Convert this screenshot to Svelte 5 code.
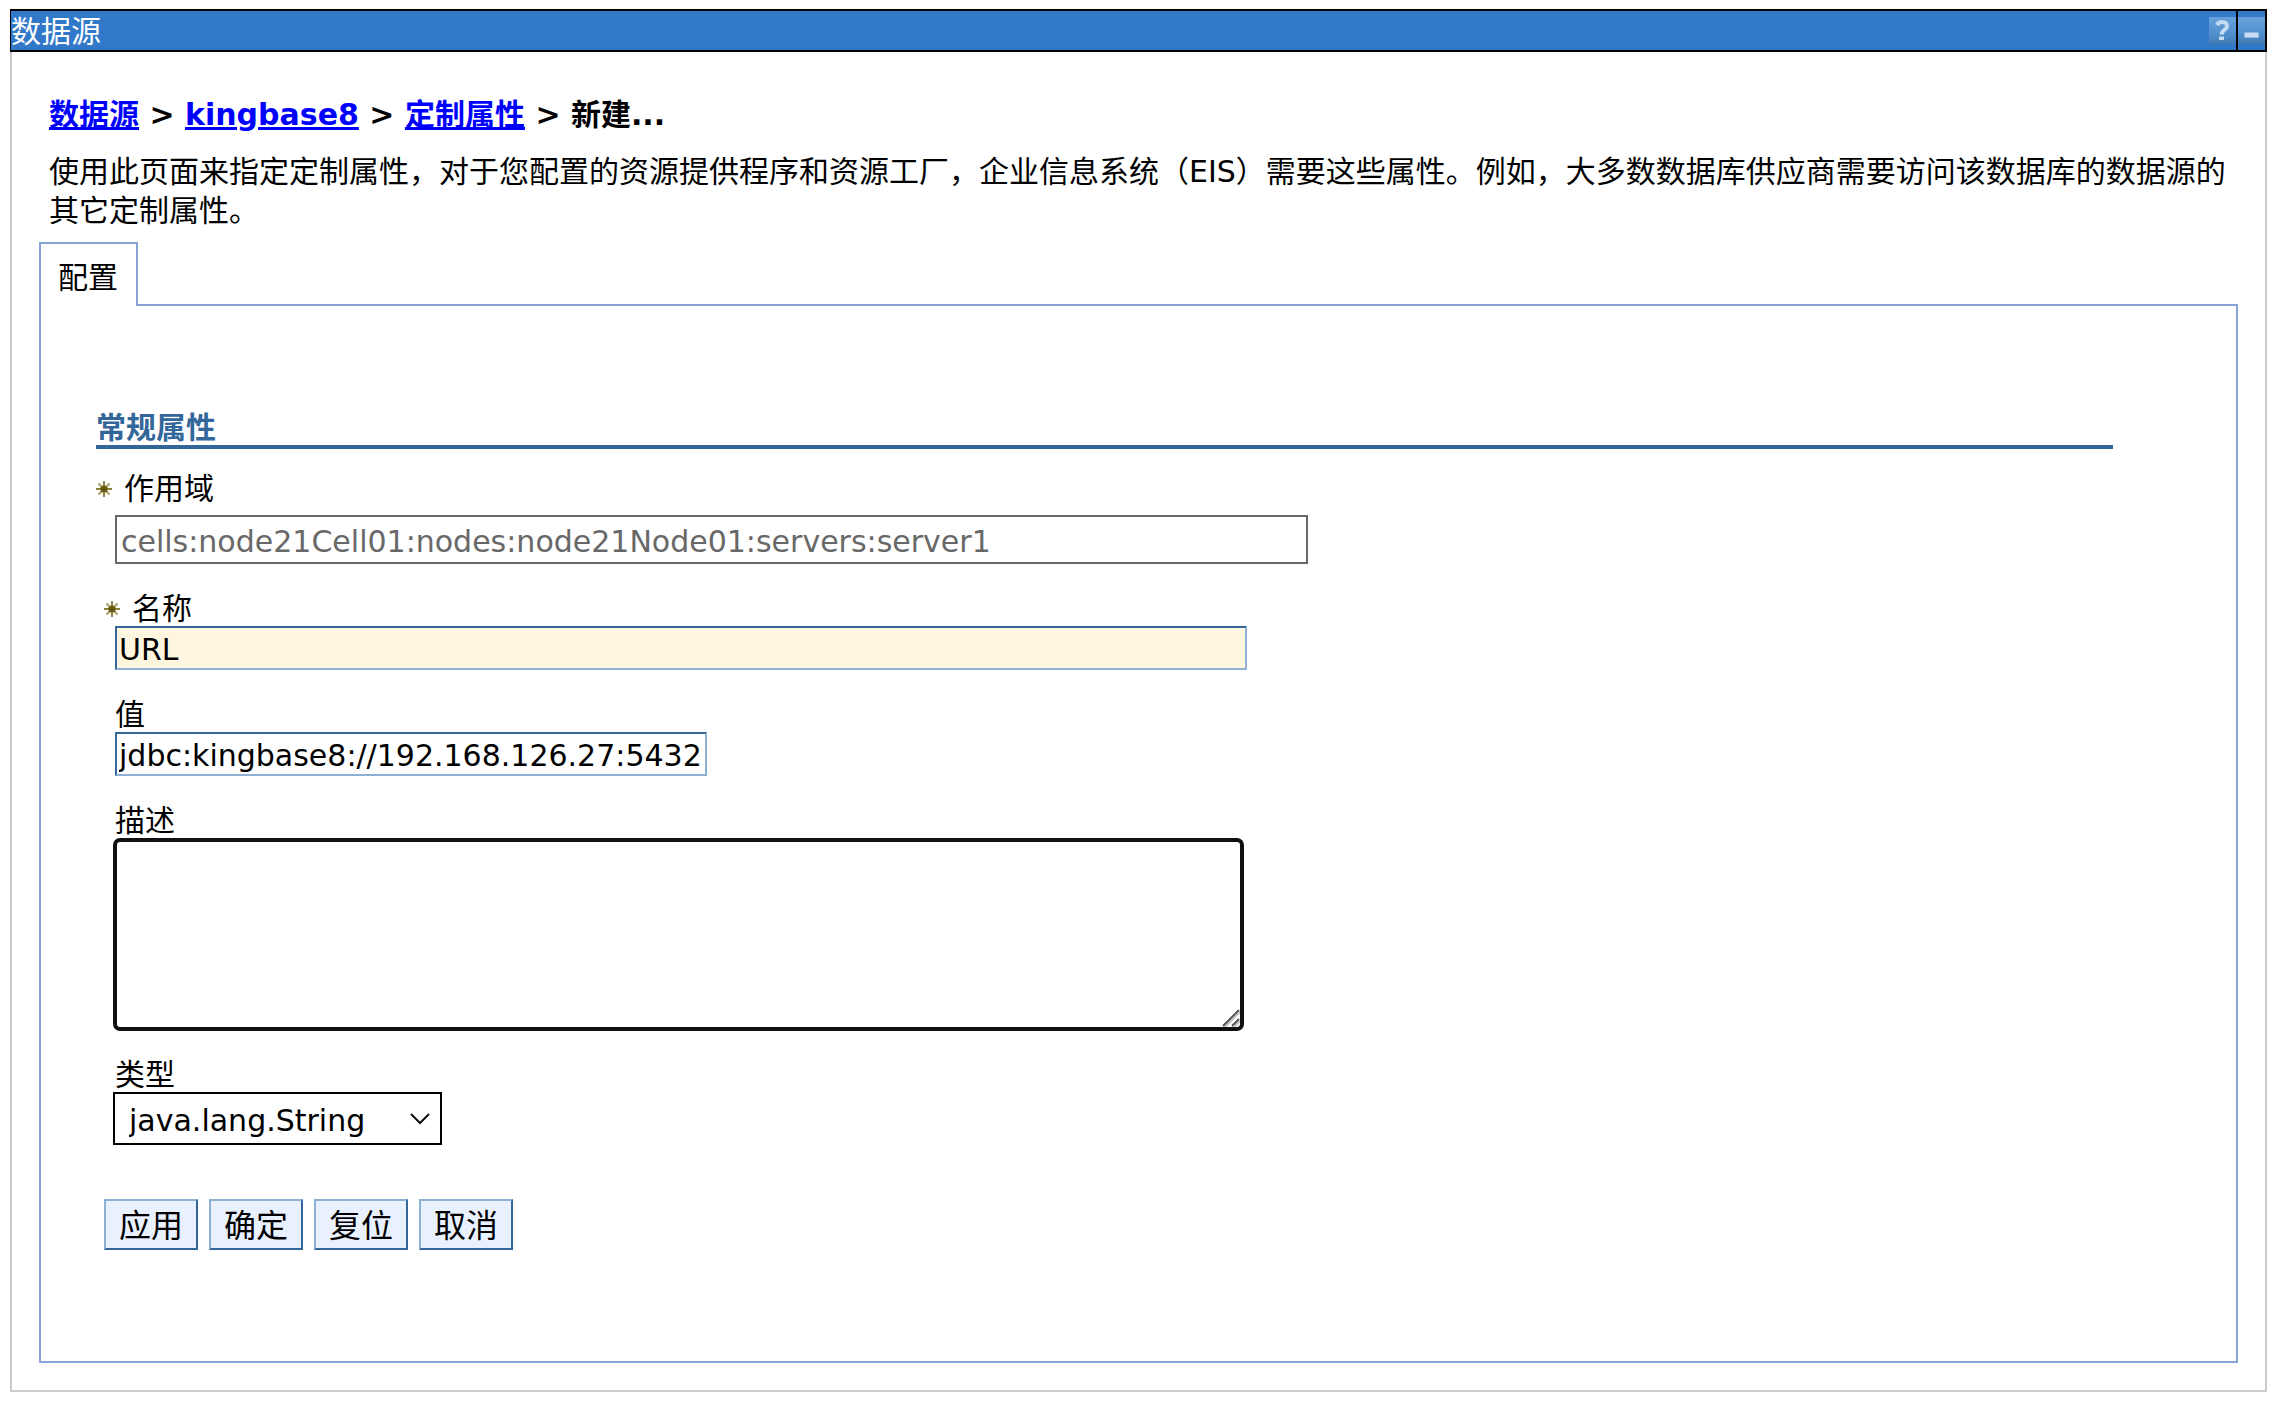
<script>
  let scope = $state('cells:node21Cell01:nodes:node21Node01:servers:server1');
  let name = $state('URL');
  let value = $state('jdbc:kingbase8://192.168.126.27:54321');
  let description = $state('');
  let type = $state('java.lang.String');

  const actions = ['应用', '确定', '复位', '取消'];
</script>

{#snippet required()}
  <svg class="required" viewBox="0 0 16 16" aria-hidden="true">
    <path d="M8 0v16M0 8h16" stroke="#8d8440" stroke-width="2" />
    <path d="M2.5 2.5l11 11M13.5 2.5l-11 11" stroke="#a89f68" stroke-width="2" />
    <circle cx="8" cy="8" r="3.6" fill="#675a0e" />
  </svg>
{/snippet}

<main class="portlet">
  <header class="titlebar">
    <h1>数据源</h1>
    <button class="tool" aria-label="帮助">
      <svg viewBox="0 0 27 27" aria-hidden="true">
        <defs>
          <linearGradient id="face" x1="0" y1="0" x2="0" y2="1">
            <stop offset="0" stop-color="#69a1da" />
            <stop offset="0.6" stop-color="#5191d0" />
            <stop offset="1" stop-color="#4379b0" />
          </linearGradient>
        </defs>
        <rect width="27" height="27" fill="url(#face)" />
        <path d="M8 8C10 4 18 4 18 9C18 13 13 12 12.500 17.500" fill="none" stroke="#c5dcf2" stroke-width="4" />
        <path d="M10 19.500h5v3.500h-5z" fill="#c5dcf2" />
      </svg>
    </button>
    <button class="tool last" aria-label="最小化">
      <svg viewBox="0 0 27 27" aria-hidden="true">
        <rect width="27" height="27" fill="url(#face)" />
        <rect x="6" y="15" width="15" height="6" rx="1" fill="#8bb7e3" />
        <rect x="7" y="16" width="13" height="4" fill="#c9def3" />
      </svg>
    </button>
  </header>

  <div class="body">
    <nav class="crumbs" aria-label="breadcrumb">
      <a href="#sources">数据源</a> &gt; <a href="#kingbase8">kingbase8</a> &gt; <a href="#custom">定制属性</a> &gt; <span>新建...</span>
    </nav>
    <p class="intro">使用此页面来指定定制属性，对于您配置的资源提供程序和资源工厂，企业信息系统（EIS）需要这些属性。例如，大多数数据库供应商需要访问该数据库的数据源的其它定制属性。</p>

    <div class="tabs">
      <button class="tab">配置</button>
      <div class="tabfill"></div>
    </div>

    <form class="panel" onsubmit={(e) => e.preventDefault()}>
      <h2>常规属性</h2>

      <div class="field scope">
        <label for="scope">{@render required()}作用域</label>
        <input id="scope" type="text" bind:value={scope} disabled />
      </div>

      <div class="field name">
        <label for="name">{@render required()}名称</label>
        <input id="name" type="text" bind:value={name} />
      </div>

      <div class="field value">
        <label for="value">值</label>
        <input id="value" type="text" bind:value={value} />
      </div>

      <div class="field description">
        <label for="description">描述</label>
        <div class="area">
          <textarea id="description" bind:value={description}></textarea>
          <svg class="grip" viewBox="0 0 18 18" aria-hidden="true">
            <path d="M3 18L18 3M12 18l6-6" stroke="#c4c4c4" stroke-width="2" />
            <path d="M1 17L17 1M10 17l7-7" stroke="#555" stroke-width="2" />
          </svg>
        </div>
      </div>

      <div class="field type">
        <label for="type">类型</label>
        <div class="picker">
          <select id="type" bind:value={type}>
            <option>java.lang.String</option>
          </select>
          <svg class="chevron" viewBox="0 0 20 12" aria-hidden="true">
            <path d="M1 1l9 9 9-9" fill="none" stroke="#111" stroke-width="2" />
          </svg>
        </div>
      </div>

      <div class="actions">
        {#each actions as action}
          <button type="button">{action}</button>
        {/each}
      </div>
    </form>
  </div>
</main>

<style>
  :global(body) {
    background: #fff;
  }

  .portlet,
  .portlet :is(input, select, textarea, button) {
    font-family: Verdana, 'DejaVu Sans', 'Noto Sans CJK SC', sans-serif;
    font-size: 30px;
    line-height: 39px;
    color: #000;
    box-sizing: border-box;
    border-radius: 0;
    margin: 0;
  }

  .portlet {
    margin: 9px 19px 12px 10px;
  }

  .portlet .titlebar {
    display: flex;
    align-items: stretch;
    height: 43px;
    box-sizing: border-box;
    background: #3178c8;
    border: 2px solid #000;
    border-left-width: 1px;
  }

  h1 {
    flex: 1;
    margin: 0;
    font-size: 30px;
    font-weight: 400;
    line-height: 41px;
    color: #fff;
  }

  .titlebar .tool {
    display: flex;
    align-items: center;
    padding: 0;
    border: 0;
    background: none;
  }

  .titlebar .last {
    border-left: 2px solid #000;
  }

  .tool svg {
    width: 27px;
    height: 27px;
  }

  .body {
    border: 2px solid #cbcbcb;
    border-top: 0;
    padding: 43px 27px 27px;
  }

  .crumbs {
    padding: 0 10px;
    font-weight: 700;
  }

  .crumbs a {
    color: #00f;
  }

  .intro {
    margin: 18px 0 12px;
    padding: 0 0 0 10px;
  }

  .tabs {
    display: flex;
  }

  .portlet .tab {
    height: 64px;
    padding: 4px 18px 0 17px;
    background: #fff;
    border: 2px solid #88a4d7;
    border-bottom: 0;
  }

  .tabfill {
    flex: 1;
    border-bottom: 2px solid #88a4d7;
  }

  .panel {
    border: 2px solid #88a4d7;
    border-top: 0;
    padding: 105px 123px 111px 55px;
  }

  h2 {
    margin: 0;
    font-size: 30px;
    line-height: 34px;
    font-weight: 700;
    color: #336699;
    border-bottom: 4px solid #336699;
  }

  .field {
    display: flex;
    flex-direction: column;
    align-items: flex-start;
    padding: 27px 0 0 19px;
  }

  .field label {
    display: flex;
    align-items: center;
    line-height: 35px;
  }

  .required {
    width: 16px;
    height: 16px;
    margin-right: 12px;
  }

  .scope {
    padding-top: 22px;
  }

  .scope label {
    margin-left: -19px;
  }

  .portlet .scope input {
    width: 1193px;
    max-width: 100%;
    height: 49px;
    margin-top: 9px;
    padding: 3px 4px 0;
    border: 2px solid #686868;
    color: #686868;
    background: #fff;
  }

  .name label {
    margin-left: -11px;
  }

  .portlet :is(.name, .value) input {
    height: 44px;
    padding: 2px 2px 0;
    border: 2px solid;
    border-color: #336699 #8cb1d3 #8cb1d3 #336699;
    background: #fff;
  }

  .portlet .name input {
    width: 1132px;
    max-width: 100%;
    background: #fff6df;
  }

  .portlet .value input {
    width: 592px;
    max-width: 100%;
  }

  .area {
    position: relative;
    display: flex;
    width: 1131px;
    max-width: 100%;
    margin-left: -2px;
  }

  .portlet .area textarea {
    width: 100%;
    height: 193px;
    padding: 4px;
    border: 4px solid #101010;
    border-radius: 7px;
    resize: none;
    background: #fff;
  }

  .grip {
    position: absolute;
    right: 4px;
    bottom: 4px;
    width: 18px;
    height: 18px;
  }

  .type {
    padding-top: 26px;
  }

  .picker {
    position: relative;
    width: 329px;
    margin-left: -2px;
  }

  .portlet .picker select {
    display: block;
    width: 100%;
    height: 53px;
    padding: 4px 40px 0 14px;
    border: 2px solid #000;
    background: #fff;
    appearance: none;
  }

  .chevron {
    position: absolute;
    right: 12px;
    top: 21px;
    width: 20px;
    height: 12px;
    pointer-events: none;
  }

  .actions {
    display: flex;
    gap: 11px;
    padding: 54px 0 0 8px;
  }

  .portlet .actions button {
    width: 94px;
    height: 51px;
    padding: 4px 0 0;
    font-size: 32px;
    border: 2px solid;
    border-color: #8cb1d3 #336699 #336699 #8cb1d3;
    background: #e9f1ff;
  }
</style>
